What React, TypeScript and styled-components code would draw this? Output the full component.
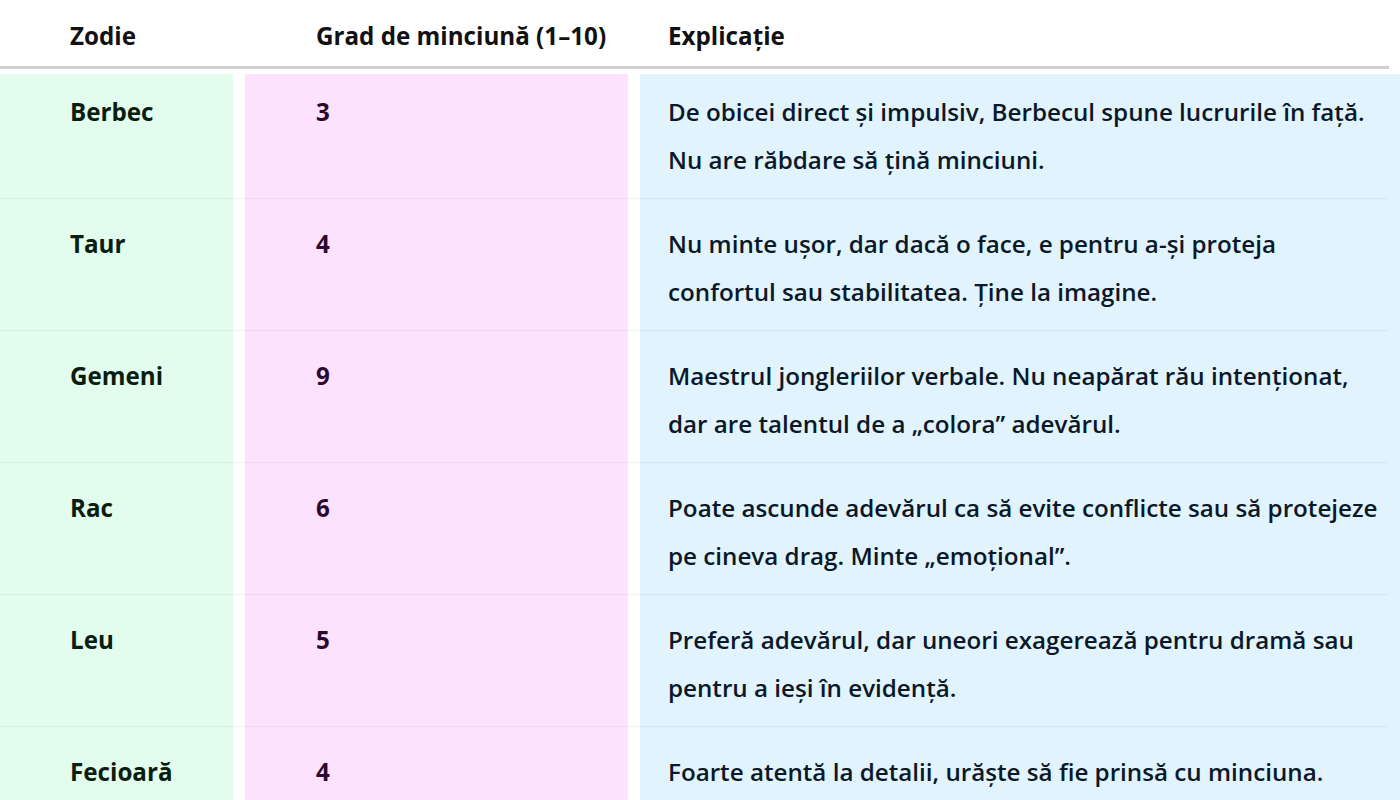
import React from "react";
import styled, { createGlobalStyle } from "styled-components";

const GlobalStyle = createGlobalStyle`
  html, body { margin: 0; padding: 0; background: #ffffff; }
  body {
    font-family: "Open Sans", "Noto Sans", sans-serif;
    -webkit-font-smoothing: antialiased;
  }
  * { box-sizing: border-box; }
`;

const Table = styled.div`
  width: 1400px;
  overflow: hidden;
`;

const HeaderRow = styled.div`
  display: grid;
  grid-template-columns: 233px 383px 1fr;
  column-gap: 12px;
  height: 69px;
  margin-right: 11px;
  border-bottom: 3px solid #d0d0d0;
`;

const HeaderCell = styled.div<{ $pad: number }>`
  padding-left: ${(p) => p.$pad}px;
  padding-top: 19px;
  font-size: 24.2px;
  line-height: 34px;
  font-weight: 700;
  color: #111111;
  white-space: nowrap;
`;

const Body = styled.div`
  margin-top: 5px;
`;

const line = "rgba(40, 60, 80, 0.07)";

const Row = styled.div`
  display: grid;
  grid-template-columns: 233px 383px 1fr;
  column-gap: 12px;
  background: linear-gradient(${line}, ${line}) no-repeat left bottom / calc(100% - 12px) 1px;
`;

const Cell = styled.div<{ $bg: string; $pad: number; $first?: boolean; $last?: boolean }>`
  padding: ${(p) => (p.$first ? 14 : 21)}px ${(p) => (p.$last ? 17 : 12)}px 15px ${(p) => p.$pad}px;
  background:
    linear-gradient(${line}, ${line}) no-repeat left bottom /
      ${(p) => (p.$last ? "calc(100% - 12px)" : "100%")} 1px,
    ${(p) => p.$bg};
  font-size: 24.2px;
  line-height: 48px;
`;

const Name = styled.span`
  font-weight: 700;
  color: #0a1d0e;
`;

const Score = styled.span`
  font-weight: 700;
  color: #2a0830;
`;

const Text = styled.span`
  font-weight: 600;
  color: #0b1828;
`;

const rows = [
  {
    sign: "Berbec",
    score: 3,
    text: "De obicei direct și impulsiv, Berbecul spune lucrurile în față. Nu are răbdare să țină minciuni.",
  },
  {
    sign: "Taur",
    score: 4,
    text: "Nu minte ușor, dar dacă o face, e pentru a-și proteja confortul sau stabilitatea. Ține la imagine.",
  },
  {
    sign: "Gemeni",
    score: 9,
    text: "Maestrul jongleriilor verbale. Nu neapărat rău intenționat, dar are talentul de a „colora” adevărul.",
  },
  {
    sign: "Rac",
    score: 6,
    text: "Poate ascunde adevărul ca să evite conflicte sau să protejeze pe cineva drag. Minte „emoțional”.",
  },
  {
    sign: "Leu",
    score: 5,
    text: "Preferă adevărul, dar uneori exagerează pentru dramă sau pentru a ieși în evidență.",
  },
  {
    sign: "Fecioară",
    score: 4,
    text: "Foarte atentă la detalii, urăște să fie prinsă cu minciuna.",
  },
];

export default function App() {
  return (
    <>
      <GlobalStyle />
      <Table>
        <HeaderRow>
          <HeaderCell $pad={70}>Zodie</HeaderCell>
          <HeaderCell $pad={71}>Grad de minciună (1–10)</HeaderCell>
          <HeaderCell $pad={28}>Explicație</HeaderCell>
        </HeaderRow>
        <Body>
          {rows.map((r, i) => (
            <Row key={r.sign}>
              <Cell $bg="#e2fced" $pad={70} $first={i === 0}>
                <Name>{r.sign}</Name>
              </Cell>
              <Cell $bg="#fde2fd" $pad={71} $first={i === 0}>
                <Score>{r.score}</Score>
              </Cell>
              <Cell $bg="#e1f3fd" $pad={28} $first={i === 0} $last>
                <Text>{r.text}</Text>
              </Cell>
            </Row>
          ))}
        </Body>
      </Table>
    </>
  );
}
